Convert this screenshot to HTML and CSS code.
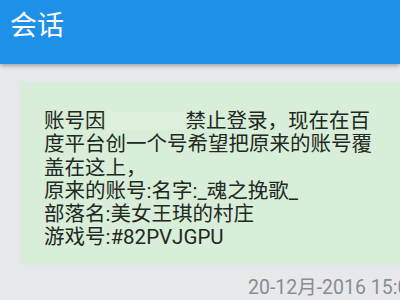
FILE: index.html
```html
<!DOCTYPE html>
<html>
<head>
<meta charset="utf-8">
<link rel="stylesheet" href="styles.css">
</head>
<body>
<div class="page">
  <header class="bar"><span class="title">会话</span></header>
  <div class="card">
    <p class="msg">账号因<span class="redact"></span>禁止登录，现在在百度平台创一个号希望把原来的账号覆盖在这上，<br>原来的账号:名字:_魂之挽歌_<br>部落名:美女王琪的村庄<br>游戏号:#82PVJGPU</p>
  </div>
  <div class="time">20-12月-2016 15:07</div>
</div>
</body>
</html>
```
FILE: styles.css
```css
html, body {
  margin: 0;
  padding: 0;
  width: 400px;
  height: 300px;
  overflow: hidden;
  background: #e6e9ec;
}
.page {
  font-family: Roboto, "Noto Sans CJK SC", sans-serif;
  width: 400px;
  height: 300px;
  overflow: hidden;
}
.bar {
  height: 64px;
  background: #1e90e8;
  box-shadow: 0 2px 4px rgba(0,0,0,0.3);
  padding: 7px 0 0 10px;
  box-sizing: border-box;
}
.title {
  color: #ffffff;
  font-family: "Noto Sans CJK SC", sans-serif;
  font-size: 27px;
  line-height: 34px;
}
.card {
  margin: 18px 0 0 20px;
  width: 400px;
  background: #d8eed8;
  padding: 28px 0 15px 24px;
  box-sizing: border-box;
}
.msg {
  margin: 0;
  width: 340px;
  color: #222822;
  font-size: 20.5px;
  line-height: 23.3px;
}
.redact {
  display: inline-block;
  width: 80px;
  height: 18px;
  background: #dcf0dc;
  vertical-align: -2px;
}
.time {
  padding: 12px 0 0 248px;
  white-space: nowrap;
  color: #8c8c8c;
  font-size: 19.5px;
  line-height: 22px;
}
```
